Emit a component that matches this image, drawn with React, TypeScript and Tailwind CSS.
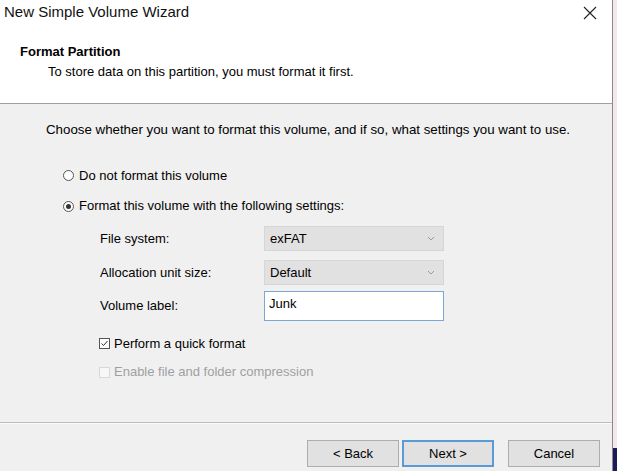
import { useState } from "react";

export default function App() {
  const [mode, setMode] = useState("format");
  const [quick, setQuick] = useState(true);
  const [label, setLabel] = useState("Junk");

  return (
    <div className="flex h-[471px] w-[617px] overflow-hidden font-['Liberation_Sans',Arial,sans-serif] text-[13px] text-black">
      {/* dialog window */}
      <div className="flex w-[613px] flex-col border-r border-[#8a8a8a] bg-[#f0f0f0]">
        {/* header */}
        <div className="h-[104px] border-b border-[#a0a0a0] bg-white">
          <div className="flex h-[24px] items-center justify-between pl-[4px] pr-[15px]">
            <span className="text-[15px] text-[#111]">New Simple Volume Wizard</span>
            <svg width="14" height="14" viewBox="0 0 14 14" className="mt-[1px]">
              <path d="M1 1 L13 13 M13 1 L1 13" stroke="#222" strokeWidth="1.1" />
            </svg>
          </div>
          <div className="pl-[20px] pt-[18px] text-[13px] font-bold">Format Partition</div>
          <div className="pl-[48px]">To store data on this partition, you must format it first.</div>
        </div>

        {/* body */}
        <div className="flex-1 pl-[46px] pt-[16px]">
          <p className="text-[13.3px]">Choose whether you want to format this volume, and if so, what settings you want to use.</p>

          <div className="mt-[26px] flex flex-col gap-[11px] pl-[17px]">
            <label className="flex items-center gap-[5px]" onClick={() => setMode("none")}>
              <Radio on={mode === "none"} />
              <span>Do not format this volume</span>
            </label>
            <label className="flex items-center gap-[5px]" onClick={() => setMode("format")}>
              <Radio on={mode === "format"} />
              <span>Format this volume with the following settings:</span>
            </label>
          </div>

          <div className="mt-[10px] grid grid-cols-[164px_180px] pl-[54px]">
            <span className="self-center">File system:</span>
            <Combo value="exFAT" />
            <span className="mt-[9px] self-center">Allocation unit size:</span>
            <div className="mt-[9px]">
              <Combo value="Default" />
            </div>
            <span className="mt-[6px] self-center">Volume label:</span>
            <input
              value={label}
              onChange={(e) => setLabel(e.target.value)}
              className="mt-[6px] h-[30px] border border-[#7aa7d6] bg-white px-[4px] pb-[4px] text-[13px] outline-none"
            />
          </div>

          <div className="mt-[13px] flex flex-col gap-[9px] pl-[53px]">
            <label className="flex items-center gap-[4px]" onClick={() => setQuick(!quick)}>
              <span className="flex h-[11px] w-[11px] items-center justify-center border border-[#555] bg-white">
                {quick && (
                  <svg width="9" height="9" viewBox="0 0 9 9">
                    <path d="M1.5 4.5 L3.5 6.5 L7.5 2" fill="none" stroke="#333" strokeWidth="1" />
                  </svg>
                )}
              </span>
              <span>Perform a quick format</span>
            </label>
            <label className="flex items-center gap-[4px] text-[#a0a0a0]">
              <span className="h-[11px] w-[11px] border border-[#d8d8d8] bg-[#f7f7f7]" />
              <span>Enable file and folder compression</span>
            </label>
          </div>
        </div>

        {/* footer */}
        <div className="h-[49px] border-t border-[#bdbdbd] shadow-[inset_0_1px_0_#fafafa]">
          <div className="flex pl-[307px] pt-[17px]">
            <Btn text="< Back" />
            <Btn text="Next >" primary />
            <div className="w-[14px]" />
            <Btn text="Cancel" />
          </div>
        </div>
      </div>

      {/* desktop edge */}
      <div className="flex flex-1 flex-col">
        <div className="flex-1 bg-[#f6e8ea]" />
        <div className="h-[23px] bg-[#1c1a5c]" />
      </div>
    </div>
  );
}

function Radio({ on }: { on: boolean }) {
  return (
    <span className="flex h-[11px] w-[11px] items-center justify-center rounded-full border border-[#555] bg-white">
      {on && <span className="h-[5px] w-[5px] rounded-full bg-[#333]" />}
    </span>
  );
}

function Combo({ value }: { value: string }) {
  return (
    <div className="flex h-[25px] items-center justify-between border border-[#d6d6d6] bg-[#e1e1e1] pl-[5px] pr-[8px]">
      <span>{value}</span>
      <svg width="8" height="5" viewBox="0 0 8 5">
        <path d="M1 1 L4 4 L7 1" fill="none" stroke="#9a9a9a" strokeWidth="1" />
      </svg>
    </div>
  );
}

function Btn({ text, primary }: { text: string; primary?: boolean }) {
  return (
    <button
      className={
        primary
          ? "ml-[3px] h-[27px] w-[92px] border-2 border-[#5b9bd5] bg-[#e1e1e1] text-[13px]"
          : "h-[27px] w-[92px] border border-[#adadad] bg-[#e1e1e1] text-[13px]"
      }
    >
      {text}
    </button>
  );
}
